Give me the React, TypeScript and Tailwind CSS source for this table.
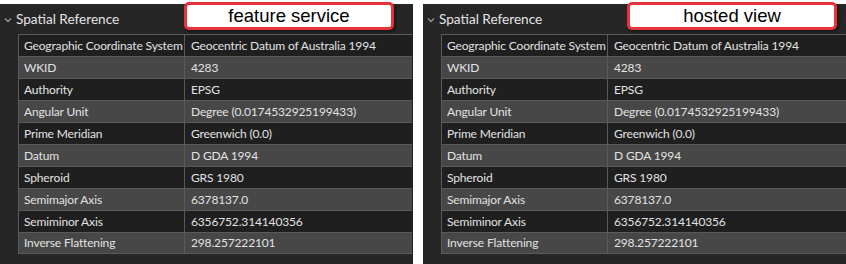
import React from "react";

const rows: [string, string][] = [
  ["Geographic Coordinate System", "Geocentric Datum of Australia 1994"],
  ["WKID", "4283"],
  ["Authority", "EPSG"],
  ["Angular Unit", "Degree (0.0174532925199433)"],
  ["Prime Meridian", "Greenwich (0.0)"],
  ["Datum", "D GDA 1994"],
  ["Spheroid", "GRS 1980"],
  ["Semimajor Axis", "6378137.0"],
  ["Semiminor Axis", "6356752.314140356"],
  ["Inverse Flattening", "298.257222101"],
];

function Chevron() {
  return (
    <svg width="8" height="6" viewBox="0 0 8 6" className="shrink-0">
      <path d="M1 1.5 L4 4.5 L7 1.5" fill="none" stroke="#9a9a9a" strokeWidth="1.3" />
    </svg>
  );
}

function Panel({ label, boxLeft, className }: { label: string; boxLeft: string; className: string }) {
  return (
    <div className={`relative mt-[4px] h-[260px] bg-[#262626] ${className}`} style={{ fontFamily: 'Lato, "Noto Sans", sans-serif' }}>
      <div className="flex h-[30px] items-center pl-[4px] pt-[1px]">
        <Chevron />
        <span className="ml-[4px] text-[13.6px] text-[#e4e4e4]">Spatial Reference</span>
      </div>
      <div className="ml-[18px] flex flex-col border-l border-[#5a5a5a] text-[12px] tracking-[-0.15px] text-[#e2e2e2]">
        {rows.map(([k, v], i) => (
          <div
            key={k}
            className={`flex h-[22px] border-t border-[#5a5a5a] ${i === rows.length - 1 ? "border-b" : ""} ${
              i % 2 === 1 ? "bg-[#474747]" : "bg-[#1f1f1f]"
            }`}
          >
            <div className="flex w-[166px] shrink-0 items-center border-r border-[#5a5a5a] pl-[5px] whitespace-nowrap">{k}</div>
            <div className="flex flex-1 items-center pl-[6px] whitespace-nowrap">{v}</div>
          </div>
        ))}
      </div>
      <div
        className={`absolute top-[-2px] ${boxLeft} flex h-[28px] w-[210px] items-center justify-center rounded-[5px] border-[3px] border-[#e8323c] bg-white shadow-[2px_2px_3px_rgba(0,0,0,0.45)]`}
        style={{ fontFamily: '"Liberation Sans", Arial, sans-serif' }}
      >
        <span className="text-[18.5px] leading-none text-black">{label}</span>
      </div>
    </div>
  );
}

export default function App() {
  return (
    <div className="flex h-[264px] w-[846px] gap-[10px] overflow-hidden bg-white">
      <Panel label="feature service" boxLeft="left-[184px]" className="w-[413px] pr-[1px]" />
      <Panel label="hosted view" boxLeft="left-[204px]" className="flex-1" />
    </div>
  );
}
